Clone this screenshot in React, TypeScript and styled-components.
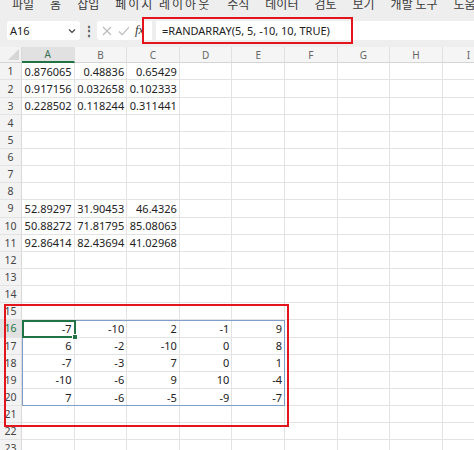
import React from "react";
import styled, { createGlobalStyle } from "styled-components";

const GlobalStyle = createGlobalStyle`
  html, body {
    margin: 0;
    padding: 0;
    background: #ffffff;
    overflow: hidden;
  }
  body {
    font-family: "Noto Sans", "Noto Sans CJK KR", sans-serif;
  }
`;

const COL_W = 52.6;
const ROW_H = 17.15;
const HEAD_H = 16.3;
const ROW_HEAD_W = 22;

const columns = ["A", "B", "C", "D", "E", "F", "G", "H", "I"];
const menus = ["파일", "홈", "삽입", "페이지 레이아웃", "수식", "데이터", "검토", "보기", "개발 도구", "도움말"];

const data: Record<number, (string | number)[]> = {
  1: ["0.876065", "0.48836", "0.65429"],
  2: ["0.917156", "0.032658", "0.102333"],
  3: ["0.228502", "0.118244", "0.311441"],
  9: ["52.89297", "31.90453", "46.4326"],
  10: ["50.88272", "71.81795", "85.08063"],
  11: ["92.86414", "82.43694", "41.02968"],
  16: [-7, -10, 2, -1, 9],
  17: [6, -2, -10, 0, 8],
  18: [-7, -3, 7, 0, 1],
  19: [-10, -6, 9, 10, -4],
  20: [7, -6, -5, -9, -7],
};

const Page = styled.div`
  width: 474px;
  height: 450px;
  overflow: hidden;
  display: flex;
  flex-direction: column;
  background: #ffffff;
`;

const MenuBar = styled.div`
  height: 14px;
  flex: none;
  display: flex;
  gap: 16px;
  padding-left: 12px;
  background: #eeeeee;
  overflow: hidden;
`;

const MenuItem = styled.span<{ $wide?: boolean }>`
  font-family: "Noto Sans CJK KR", sans-serif;
  font-size: 12px;
  line-height: 14px;
  margin-top: -3px;
  color: #3a3a3a;
  white-space: nowrap;
  letter-spacing: ${(p) => (p.$wide ? "2px" : "normal")};
`;

const Toolbar = styled.div`
  position: relative;
  height: 33px;
  flex: none;
  display: flex;
  align-items: flex-start;
  padding: 7px 0 0 7px;
  box-sizing: border-box;
  background: #eeeeee;
`;

const NameBox = styled.div`
  width: 73px;
  height: 19px;
  box-sizing: border-box;
  display: flex;
  align-items: center;
  justify-content: space-between;
  padding: 0 4px 0 3px;
  background: #ffffff;
  border-radius: 3px;
  font-size: 11px;
  color: #222;
`;

const Dots = styled.div`
  width: 17px;
  height: 19px;
  display: flex;
  align-items: center;
  justify-content: center;
  color: #555;
  font-size: 12px;
  font-weight: bold;
`;

const FxBox = styled.div`
  width: 55px;
  height: 19px;
  display: flex;
  align-items: center;
  gap: 6px;
  padding-left: 5px;
  box-sizing: border-box;
  background: #ffffff;
  border-radius: 3px 0 0 3px;
`;

const Fx = styled.span`
  font-family: "Liberation Serif", serif;
  font-style: italic;
  font-size: 12.5px;
  color: #333;
  margin-left: -1px;
`;

const FormulaInput = styled.div`
  flex: 1;
  height: 19px;
  margin-left: 4px;
  display: flex;
  align-items: center;
  padding-left: 6px;
  background: #ffffff;
  font-size: 11px;
  color: #222;
  white-space: nowrap;
`;

const RedFrame = styled.div`
  position: absolute;
  border: 2.5px solid #e3141c;
  box-sizing: border-box;
  pointer-events: none;
`;

const Sheet = styled.div`
  position: relative;
  flex: 1;
  overflow: hidden;
`;

const Grid = styled.div`
  display: grid;
  grid-template-columns: ${ROW_HEAD_W}px repeat(${columns.length}, ${COL_W}px);
  grid-template-rows: ${HEAD_H}px;
  grid-auto-rows: ${ROW_H}px;
`;

const Corner = styled.div`
  position: relative;
  background: #f3f3f3;
  border-right: 1px solid #d9d9d9;
  border-bottom: 1px solid #d4d4d4;
  box-sizing: border-box;
  &::after {
    content: "";
    position: absolute;
    right: 2px;
    bottom: 2px;
    border-style: solid;
    border-width: 0 0 11px 11px;
    border-color: transparent transparent #d6d6d6 transparent;
  }
`;

const ColHeader = styled.div<{ $active?: boolean }>`
  box-sizing: border-box;
  display: flex;
  align-items: center;
  justify-content: center;
  background: ${(p) => (p.$active ? "#e1e1e1" : "#f5f5f5")};
  border-right: 1px solid #e0e0e0;
  border-bottom: ${(p) => (p.$active ? "2px solid #217346" : "1px solid #d4d4d4")};
  font-size: 10px;
  color: ${(p) => (p.$active ? "#3c6e52" : "#666")};
`;

const RowHeader = styled.div<{ $active?: boolean }>`
  box-sizing: border-box;
  display: flex;
  align-items: center;
  justify-content: center;
  background: ${(p) => (p.$active ? "#e1e1e1" : "#f3f3f3")};
  border-right: 1px solid #d9d9d9;
  border-bottom: 1px solid #e3e3e3;
  font-size: 10.5px;
  color: ${(p) => (p.$active ? "#217346" : "#444")};
`;

const Cell = styled.div`
  box-sizing: border-box;
  display: flex;
  align-items: center;
  justify-content: flex-end;
  padding-right: 2px;
  border-right: 1px solid #e3e3e3;
  border-bottom: 1px solid #e3e3e3;
  font-size: 11px;
  color: #222;
  white-space: nowrap;
  overflow: hidden;
`;

const SpillBorder = styled.div`
  position: absolute;
  border: 1px solid #7f9ec9;
  box-sizing: border-box;
  pointer-events: none;
`;

const Selection = styled.div`
  position: absolute;
  border: 2px solid #217346;
  box-sizing: border-box;
  pointer-events: none;
  &::after {
    content: "";
    position: absolute;
    right: -4px;
    bottom: -4px;
    width: 4px;
    height: 4px;
    background: #217346;
    border: 1px solid #ffffff;
  }
`;

const Chevron = () => (
  <svg width="8" height="6" viewBox="0 0 8 6">
    <path d="M1 1.5 L4 4.5 L7 1.5" fill="none" stroke="#444" strokeWidth="1.2" />
  </svg>
);

const Cross = () => (
  <svg width="10" height="10" viewBox="0 0 10 10">
    <path d="M1 1 L9 9 M9 1 L1 9" fill="none" stroke="#b9b9b9" strokeWidth="1.1" />
  </svg>
);

const Check = () => (
  <svg width="12" height="10" viewBox="0 0 12 10">
    <path d="M1 5.5 L4.2 8.6 L11 1.2" fill="none" stroke="#b9b9b9" strokeWidth="1.1" />
  </svg>
);

export default function App() {
  const rows = Array.from({ length: 24 }, (_, i) => i + 1);
  const rowTop = (r: number) => HEAD_H + (r - 1) * ROW_H;

  return (
    <Page>
      <GlobalStyle />
      <MenuBar>
        {menus.map((m) => (
          <MenuItem key={m} $wide={m === "페이지 레이아웃"}>
            {m}
          </MenuItem>
        ))}
      </MenuBar>
      <Toolbar>
        <NameBox>
          A16
          <Chevron />
        </NameBox>
        <Dots>⋮</Dots>
        <FxBox>
          <Cross />
          <Check />
          <Fx>fx</Fx>
        </FxBox>
        <FormulaInput>=RANDARRAY(5, 5, -10, 10, TRUE)</FormulaInput>
        <RedFrame style={{ left: 141.5, top: 3.3, width: 211.5, height: 27 }} />
      </Toolbar>
      <Sheet>
        <Grid>
          <Corner />
          {columns.map((c) => (
            <ColHeader key={c} $active={c === "A"}>
              {c}
            </ColHeader>
          ))}
          {rows.map((r) => (
            <React.Fragment key={r}>
              <RowHeader $active={r === 16}>{r}</RowHeader>
              {columns.map((c, ci) => (
                <Cell key={c}>{data[r]?.[ci] ?? ""}</Cell>
              ))}
            </React.Fragment>
          ))}
        </Grid>
        <SpillBorder
          style={{ left: ROW_HEAD_W, top: rowTop(16) - 1, width: COL_W * 5, height: ROW_H * 5 + 1 }}
        />
        <Selection style={{ left: ROW_HEAD_W, top: rowTop(16) - 1, width: COL_W + 1, height: ROW_H + 1 }} />
        <RedFrame style={{ left: 4, top: 257, width: 284.5, height: 122.5 }} />
      </Sheet>
    </Page>
  );
}
